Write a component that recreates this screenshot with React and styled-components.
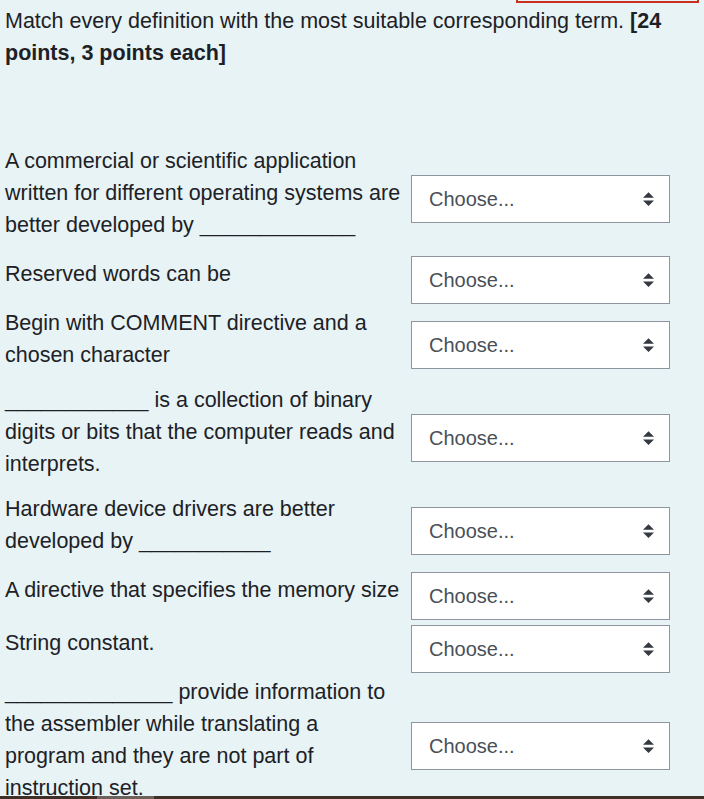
import React from "react";
import styled, { createGlobalStyle } from "styled-components";

const GlobalStyle = createGlobalStyle`
  html, body {
    margin: 0;
    padding: 0;
    background: #e7f3f5;
  }
  body {
    font-family: "Liberation Sans", Arial, sans-serif;
    color: #1d2125;
  }
`;

const Page = styled.div`
  width: 704px;
  height: 796px;
  overflow: hidden;
  background: #e7f3f5;
`;

const FlagBox = styled.div`
  box-sizing: border-box;
  height: 3px;
  width: 183px;
  margin-left: 516px;
  border: 2px solid #ca3120;
  border-top: 0;
`;

const Question = styled.div`
  margin: 2px 0 76px 5px;
  font-size: 21.5px;
  line-height: 32px;
  width: 690px;

  b {
    font-weight: 700;
  }
`;

const Rows = styled.div`
  display: flex;
  flex-direction: column;
  gap: 1px;
  padding-left: 5px;
`;

const Row = styled.div`
  display: flex;
  align-items: center;
  gap: 9px;
`;

const Term = styled.div`
  width: 397px;
  font-size: 21.5px;
  line-height: 32px;
  padding-bottom: 12px;
`;

const SelectWrap = styled.div`
  position: relative;
  margin: 2px 0;
`;

const Select = styled.select`
  appearance: none;
  -webkit-appearance: none;
  box-sizing: border-box;
  width: 259px;
  height: 48px;
  padding: 0 40px 0 17px;
  border: 1px solid #8f959e;
  border-radius: 0;
  background: #fff;
  color: #495057;
  font-family: "Liberation Sans", Arial, sans-serif;
  font-size: 20px;
  outline: none;
`;

const Arrow = styled.svg`
  position: absolute;
  right: 16px;
  top: 17px;
  pointer-events: none;
`;

const BottomBar = styled.div`
  height: 3px;
  background: #3d3029;
  display: flex;
`;

const Thumb = styled.div`
  margin-left: 97px;
  width: 57px;
  background: #6b625c;
`;

const items = [
  "A commercial or scientific application written for different operating systems are better developed by _____________",
  "Reserved words can be",
  "Begin with COMMENT directive and a chosen character",
  "____________ is a collection of binary digits or bits that the computer reads and interprets.",
  "Hardware device drivers are better developed by ___________",
  "A directive that specifies the memory size",
  "String constant.",
  "______________ provide information to the assembler while translating a program and they are not part of instruction set.",
];

const ChooseBox = () => (
  <SelectWrap>
    <Select defaultValue="">
      <option value="">Choose...</option>
    </Select>
    <Arrow width="11" height="14" viewBox="0 0 4 5">
      <path d="M2 0L0 2h4zm0 5L0 3h4z" fill="#343a40" />
    </Arrow>
  </SelectWrap>
);

export default function App() {
  return (
    <>
      <GlobalStyle />
      <Page>
        <FlagBox />
        <Question>
          Match every definition with the most suitable corresponding term.{" "}
          <b>[24 points, 3 points each]</b>
        </Question>
        <Rows>
          {items.map((text, i) => (
            <Row key={i}>
              <Term>{text}</Term>
              <ChooseBox />
            </Row>
          ))}
        </Rows>
      </Page>
      <BottomBar>
        <Thumb />
      </BottomBar>
    </>
  );
}
